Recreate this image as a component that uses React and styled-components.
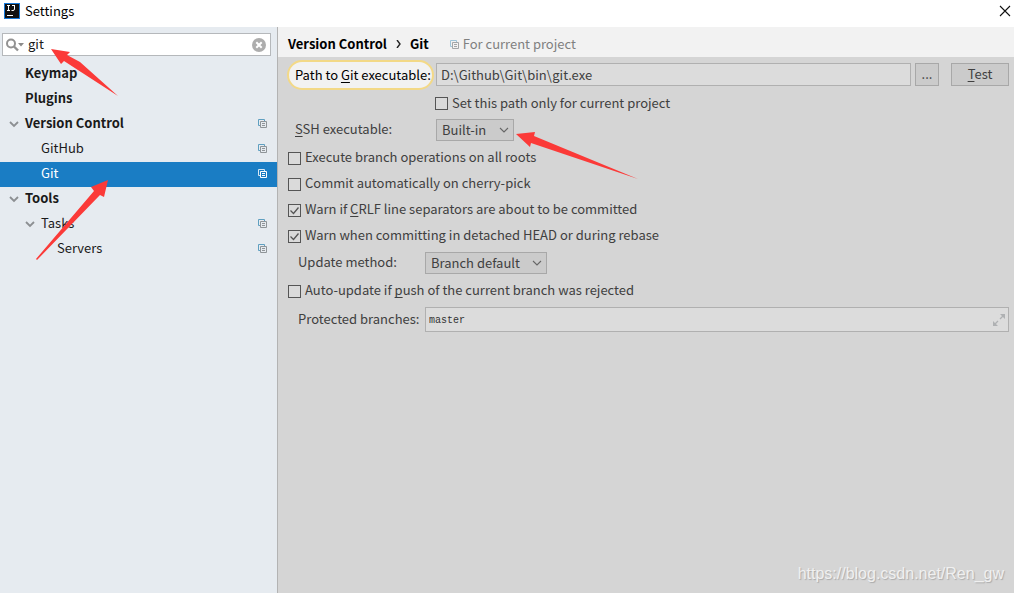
import React from "react";
import styled, { createGlobalStyle } from "styled-components";

const Global = createGlobalStyle`
  *, *::before, *::after { box-sizing: border-box; }
  body { margin: 0; background: #fff; }
  body, button, input, select {
    font-family: "Noto Sans CJK SC", "Noto Sans", sans-serif;
    font-size: 13px;
    line-height: 18px;
  }
  u { text-underline-offset: 2px; text-decoration-thickness: 1px; text-decoration-skip-ink: none; }
`;

const Window = styled.div`
  position: relative;
  min-height: 100vh;
  display: flex;
  flex-direction: column;
  overflow: hidden;
`;

const TitleBar = styled.header`
  display: flex;
  align-items: center;
  gap: 5px;
  height: 27px;
  padding: 0 3px 5px 4px;
  background: #fff;
  color: #000;
`;

const Title = styled.h1`
  flex: 1;
  margin: 0;
  font-size: 13px;
  font-weight: 400;
`;

const IconButton = styled.button`
  display: flex;
  padding: 0;
  border: 0;
  background: none;
`;

const Body = styled.div`
  flex: 1;
  display: flex;
`;

const Sidebar = styled.aside`
  flex: 0 0 278px;
  background: #e6ebf0;
  border-right: 1px solid #b3b3b3;
`;

const SearchBox = styled.label`
  display: flex;
  align-items: center;
  gap: 4px;
  height: 23px;
  margin: 6px 6px 6px 2px;
  padding: 0 4px 0 3px;
  background: #fff;
  border: 1px solid #b5b8bb;
`;

const SearchInput = styled.input`
  flex: 1;
  min-width: 0;
  padding: 0 0 2px;
  border: 0;
  outline: 0;
  background: none;
  color: #1a1a1a;
`;

const Tree = styled.ul`
  margin: 0;
  padding: 0;
  list-style: none;
`;

const TreeRow = styled.button`
  display: flex;
  align-items: center;
  width: 100%;
  height: 25px;
  padding: 0 10px 2px ${(p) => 9 + p.$level * 16}px;
  border: 0;
  text-align: left;
  font-weight: ${(p) => (p.$level === 0 ? 700 : 400)};
  background: ${(p) => (p.$selected ? "#1a7dc4" : "transparent")};
  color: ${(p) => (p.$selected ? "#fff" : "#1a1a1a")};
`;

const Twisty = styled.span`
  display: flex;
  width: 16px;
`;

const TreeLabel = styled.span`
  flex: 1;
  padding-bottom: 1px;
`;

const Main = styled.main`
  flex: 1;
  min-width: 0;
  background: #d5d5d5;
  color: #404040;
`;

const Crumbs = styled.div`
  display: flex;
  align-items: center;
  height: 30px;
  padding: 4px 10px 0;
  gap: 9px;
  background: #f2f2f2;
  color: #000;
  font-weight: 700;
`;

const Scope = styled.span`
  display: flex;
  align-items: center;
  gap: 4px;
  margin-left: 12px;
  font-weight: 400;
  color: #808080;
`;

const Form = styled.form`
  padding: 0 5px 0 10px;
`;

const Row = styled.div`
  display: flex;
  align-items: center;
  height: ${(p) => p.$h}px;
  padding-left: ${(p) => p.$indent || 0}px;
`;

const FieldLabel = styled.label`
  flex: 0 0 ${(p) => p.$w}px;
  padding: 0 0 2px ${(p) => p.$pad}px;
  white-space: nowrap;
`;

const Highlight = styled.label`
  flex: 0 0 147px;
  height: 30px;
  margin: 0 2px 0 -1px;
  padding: 4px 0 0 6px;
  border: 2px solid #f3d987;
  border-radius: 15px;
  background: #f2f2f2;
  color: #000;
  white-space: nowrap;
`;

const TextField = styled.input`
  flex: 1;
  min-width: 0;
  height: 23px;
  padding: 0 4px;
  border: 1px solid #b0b0b0;
  background: #dcdcdc;
  color: #404040;
`;

const ExpandField = styled.div`
  flex: 1;
  display: flex;
  align-items: center;
  height: 25px;
  padding: 0 3px;
  border: 1px solid #b0b0b0;
  background: #dcdcdc;
`;

const CodeInput = styled.input`
  flex: 1;
  min-width: 0;
  padding: 2px 0 0;
  border: 0;
  background: none;
  color: #333;
  font-family: "Liberation Mono", monospace;
  font-size: 10px;
`;

const PushButton = styled.button`
  width: ${(p) => p.$w}px;
  height: 23px;
  margin-left: ${(p) => p.$gap}px;
  padding: 0 0 2px;
  border: 1px solid #a8a8a8;
  background: #cbcbcb;
  color: #404040;
`;

const Combo = styled.div`
  display: grid;
  align-items: center;
  width: ${(p) => p.$w}px;

  > * { grid-area: 1 / 1; }
  > svg { justify-self: end; margin-right: 5px; pointer-events: none; }
`;

const Select = styled.select`
  width: 100%;
  height: 22px;
  padding: 0 18px 0 5px;
  appearance: none;
  border: 1px solid #a8a8a8;
  border-radius: 0;
  background: #cbcbcb;
  color: #404040;
`;

const CheckLabel = styled.label`
  display: flex;
  align-items: center;
  gap: 4px;
  white-space: nowrap;
`;

const CheckText = styled.span`
  padding-bottom: 2px;
`;

const CheckBox = styled.span`
  display: grid;
  width: 13px;
  height: 13px;

  > * { grid-area: 1 / 1; }
  > svg { display: none; pointer-events: none; }
  > input:checked + svg { display: block; }
`;

const Tick = styled.input.attrs({ type: "checkbox" })`
  width: 13px;
  height: 13px;
  margin: 0;
  appearance: none;
  border: 1px solid #555;
  background: #dadada;
`;

const Arrow = styled.svg`
  position: absolute;
  left: ${(p) => p.$x}px;
  top: ${(p) => p.$y}px;
  pointer-events: none;
`;

const Watermark = styled.a`
  position: absolute;
  right: 10px;
  bottom: 10px;
  font: 16px/18px "Liberation Sans", sans-serif;
  color: #f0f0f0;
  text-decoration: none;
  text-shadow: 1px 1px 1px #aaa;
`;

const AppIcon = () => (
  <svg width="16" height="16" viewBox="0 0 16 16" aria-hidden="true">
    <rect width="16" height="16" fill="#1678d8" />
    <rect x="1" y="1" width="14" height="14" fill="#111" />
    <path d="M3 2.5h3M4.5 2.5v5M3 7.5h3M8 2.5h3M10.5 2.5v3.5q0 1.5-1.5 1.5H7.5" stroke="#fff" fill="none" />
    <path d="M3 12.5h6" stroke="#fff" />
  </svg>
);

const CloseIcon = () => (
  <svg width="12" height="12" viewBox="0 0 12 12" aria-hidden="true">
    <path d="M1 1l10 10M11 1L1 11" stroke="#111" strokeWidth="1.1" />
  </svg>
);

const SearchIcon = () => (
  <svg width="18" height="14" viewBox="0 0 18 14" aria-hidden="true">
    <circle cx="5" cy="5.5" r="4" fill="none" stroke="#929292" strokeWidth="2" />
    <path d="M8 8.5l4 4" stroke="#929292" strokeWidth="2.4" />
    <path d="M12 5h6l-3 3.5z" fill="#8a8a8a" />
  </svg>
);

const ClearIcon = () => (
  <svg width="14" height="14" viewBox="0 0 14 14" aria-hidden="true">
    <circle cx="7" cy="7" r="7" fill="#adadad" />
    <path d="M4.3 4.3l5.4 5.4M9.7 4.3L4.3 9.7" stroke="#fff" strokeWidth="2" />
  </svg>
);

const Chevron = ({ color = "#8c8f92", width = 1.8 }) => (
  <svg width="10" height="8" viewBox="0 0 10 8" aria-hidden="true">
    <path d="M1 2l4 4 4-4" fill="none" stroke={color} strokeWidth={width} />
  </svg>
);

const ScopeIcon = ({ back = "#5f9fc0", front = "#8f9498" }) => (
  <svg width="9" height="9" viewBox="0 0 9 9" aria-hidden="true">
    <path d="M2 6.5H.5v-6h6V2" fill="none" stroke={back} />
    <path d="M2.5 2.5h6v6h-6zM4 4.5h3M4 6.5h3" fill="none" stroke={front} />
  </svg>
);

const ExpandIcon = () => (
  <svg width="12" height="12" viewBox="0 0 12 12" aria-hidden="true">
    <path d="M7 0h5v5zM0 7v5h5z" fill="#afb1b3" />
    <path d="M7 5l3-3M2 10l3-3" stroke="#afb1b3" strokeWidth="1.3" />
  </svg>
);

const Check = ({ label, ...rest }) => (
  <CheckLabel>
    <CheckBox>
      <Tick {...rest} />
      <svg width="13" height="13" viewBox="0 0 13 13" aria-hidden="true">
        <path d="M2.5 6.5l3 3 5-6" fill="none" stroke="#555" strokeWidth="1.3" />
      </svg>
    </CheckBox>
    <CheckText>{label}</CheckText>
  </CheckLabel>
);

const ComboBox = ({ id, value, w }) => (
  <Combo $w={w}>
    <Select id={id} defaultValue={value}>
      <option>{value}</option>
    </Select>
    <Chevron color="#666" width={1.1} />
  </Combo>
);

const items = [
  { label: "Keymap", level: 0 },
  { label: "Plugins", level: 0 },
  { label: "Version Control", level: 0, open: true, scoped: true },
  { label: "GitHub", level: 1, scoped: true },
  { label: "Git", level: 1, scoped: true, selected: true },
  { label: "Tools", level: 0, open: true },
  { label: "Tasks", level: 1, open: true, scoped: true },
  { label: "Servers", level: 2, scoped: true },
];

export default function App() {
  return (
    <Window>
      <Global />
      <TitleBar>
        <AppIcon />
        <Title>Settings</Title>
        <IconButton aria-label="Close"><CloseIcon /></IconButton>
      </TitleBar>
      <Body>
        <Sidebar>
          <SearchBox>
            <SearchIcon />
            <SearchInput aria-label="Search settings" defaultValue="git" />
            <IconButton aria-label="Clear search"><ClearIcon /></IconButton>
          </SearchBox>
          <Tree>
            {items.map((it) => (
              <li key={it.label}>
                <TreeRow $level={it.level} $selected={it.selected}>
                  <Twisty>{it.open && <Chevron />}</Twisty>
                  <TreeLabel>{it.label}</TreeLabel>
                  {it.scoped && (it.selected ? <ScopeIcon back="#d8e8f4" front="#fff" /> : <ScopeIcon />)}
                </TreeRow>
              </li>
            ))}
          </Tree>
        </Sidebar>
        <Main>
          <Crumbs>
            <span>Version Control</span>
            <svg width="5" height="8" viewBox="0 0 5 8" aria-hidden="true">
              <path d="M1 0l3 4-3 4" fill="none" stroke="#222" strokeWidth="1.4" />
            </svg>
            <span>Git</span>
            <Scope><ScopeIcon back="#9fc4d8" front="#a3a6a8" />For current project</Scope>
          </Crumbs>
          <Form onSubmit={(e) => e.preventDefault()}>
            <Row $h={35}>
              <Highlight htmlFor="path">Path to <u>G</u>it executable:</Highlight>
              <TextField id="path" defaultValue="D:\Github\Git\bin\git.exe" />
              <PushButton type="button" $w={24} $gap={4}>...</PushButton>
              <PushButton type="button" $w={58} $gap={12}><u>T</u>est</PushButton>
            </Row>
            <Row $h={23} $indent={147}><Check label="Set this path only for current project" /></Row>
            <Row $h={30}>
              <FieldLabel htmlFor="ssh" $w={148} $pad={7}><u>S</u>SH executable:</FieldLabel>
              <ComboBox id="ssh" value="Built-in" w={78} />
            </Row>
            <Row $h={26}><Check label="Execute branch operations on all roots" /></Row>
            <Row $h={26}><Check label="Commit automatically on cherry-pick" /></Row>
            <Row $h={26}><Check defaultChecked label={<>Warn if <u>C</u>RLF line separators are about to be committed</>} /></Row>
            <Row $h={26}><Check defaultChecked label="Warn when committing in detached HEAD or during rebase" /></Row>
            <Row $h={28}>
              <FieldLabel htmlFor="update" $w={137} $pad={10}>Update method:</FieldLabel>
              <ComboBox id="update" value="Branch default" w={122} />
            </Row>
            <Row $h={28}><Check label={<>Auto-update if <u>p</u>ush of the current branch was rejected</>} /></Row>
            <Row $h={29}>
              <FieldLabel htmlFor="protected" $w={137} $pad={10}>Protected branches:</FieldLabel>
              <ExpandField>
                <CodeInput id="protected" defaultValue="master" />
                <IconButton type="button" aria-label="Expand"><ExpandIcon /></IconButton>
              </ExpandField>
            </Row>
          </Form>
        </Main>
      </Body>
      <Arrow $x={50} $y={47} width="70" height="52" viewBox="0 0 70 52" aria-hidden="true">
        <path d="M1 2L20 5L17 8L30 15L68 49L14 14L11 17Z" fill="#fb3a38" />
      </Arrow>
      <Arrow $x={34} $y={178} width="78" height="84" viewBox="0 0 78 84" aria-hidden="true">
        <path d="M74 2L70 19L66 17L3 82L2 81L60 13L57 9Z" fill="#fb3a38" />
      </Arrow>
      <Arrow $x={514} $y={130} width="128" height="52" viewBox="0 0 128 52" aria-hidden="true">
        <path d="M2 4L21 2L20 6L124 49L17 13L16 17Z" fill="#fb3a38" />
      </Arrow>
      <Watermark href="https://blog.csdn.net/Ren_gw">https://blog.csdn.net/Ren_gw</Watermark>
    </Window>
  );
}
